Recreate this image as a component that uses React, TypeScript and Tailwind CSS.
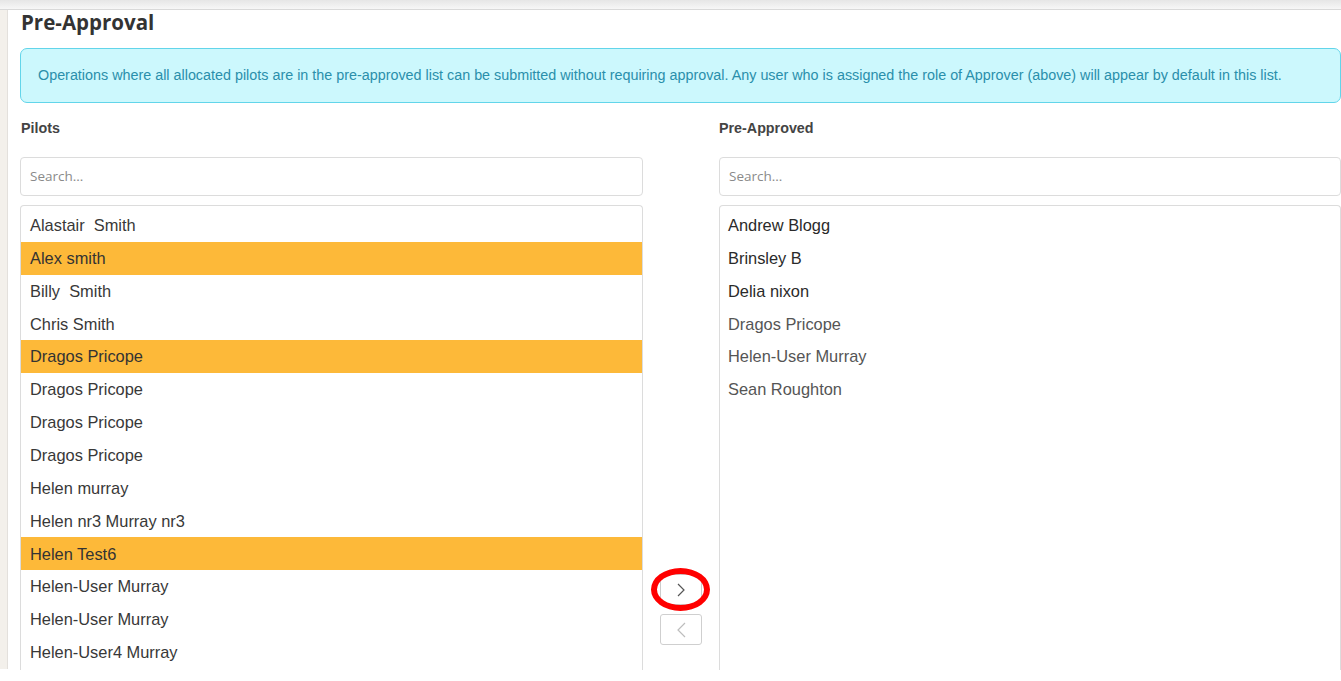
import React from "react";

type Row = { name: string; selected?: boolean; tone?: "dark" | "mid" };

const pilots: Row[] = [
  { name: "Alastair\u00a0 Smith" },
  { name: "Alex smith", selected: true },
  { name: "Billy\u00a0 Smith" },
  { name: "Chris Smith" },
  { name: "Dragos Pricope", selected: true },
  { name: "Dragos Pricope" },
  { name: "Dragos Pricope" },
  { name: "Dragos Pricope" },
  { name: "Helen murray" },
  { name: "Helen nr3 Murray nr3" },
  { name: "Helen Test6", selected: true },
  { name: "Helen-User Murray" },
  { name: "Helen-User Murray" },
  { name: "Helen-User4 Murray" },
];

const approved: Row[] = [
  { name: "Andrew Blogg", tone: "dark" },
  { name: "Brinsley B", tone: "dark" },
  { name: "Delia nixon", tone: "dark" },
  { name: "Dragos Pricope", tone: "mid" },
  { name: "Helen-User Murray", tone: "mid" },
  { name: "Sean Roughton", tone: "mid" },
];

const arial = { fontFamily: '"Liberation Sans", Arial, sans-serif' };
const open = { fontFamily: '"Open Sans", "Liberation Sans", sans-serif' };

function List({ rows, padX }: { rows: Row[]; padX: string }) {
  return (
    <div className="h-[465px] rounded-t-[4px] border border-b-0 border-[#dcdcdc] bg-white pt-[3px] overflow-hidden">
      {rows.map((r, i) => (
        <div
          key={i}
          style={arial}
          className={
            "flex h-[32.85px] items-center text-[16.4px] " +
            padX +
            " " +
            (r.selected
              ? "bg-[#fdb939] text-[#333]"
              : r.tone === "mid"
              ? "text-[#555]"
              : r.tone === "dark"
              ? "text-[#2a2a2a]"
              : "text-[#383838]")
          }
        >
          {r.name}
        </div>
      ))}
    </div>
  );
}

function Search() {
  return (
    <div className="flex h-[39px] items-center rounded-[4px] border border-[#dcdcdc] bg-white px-[9px]">
      <span style={open} className="text-[13.5px] text-[#8a8a8a]">
        Search...
      </span>
    </div>
  );
}

export default function App() {
  return (
    <div className="h-[681px] w-[1341px] overflow-hidden bg-white">
      <div className="h-[10px] border-b border-[#d9d9d9] bg-gradient-to-b from-[#e6e6e6] to-[#f7f7f7]" />
      <div className="flex h-[659px]">
        <div className="w-[8px] shrink-0 border-r border-[#e3e0dc] bg-[#f3f0eb]" />
        <div className="w-[1333px] shrink-0 pl-[12px]">
          <div className="w-[1321px]">
            <h1
              style={open}
              className="-mt-[2px] pl-[1px] text-[20.5px] leading-[28px] font-bold text-[#333]"
            >
              Pre-Approval
            </h1>
            <div className="mt-[12px] flex h-[55px] items-center rounded-[7px] border border-[#62d5ea] bg-[#ccf8fd] px-[17px] pt-[1px]">
              <p style={arial} className="whitespace-nowrap text-[14.35px] text-[#2a8fab]">
                Operations where all allocated pilots are in the pre-approved list can be submitted without requiring approval. Any user who is assigned the role of Approver (above) will appear by default in this list.
              </p>
            </div>
            <div className="mt-[15px] flex">
              <div className="w-[623px] shrink-0">
                <div style={arial} className="h-[20px] pl-[1px] text-[14.3px] leading-[20px] font-bold text-[#444]">
                  Pilots
                </div>
                <div className="mt-[19px]">
                  <Search />
                </div>
                <div className="mt-[9px]">
                  <List rows={pilots} padX="px-[9px]" />
                </div>
              </div>
              <div className="flex w-[76px] shrink-0 flex-col items-center pt-[456px] gap-[9px]">
                <div className="relative">
                  <button className="flex h-[31px] w-[42px] items-center justify-center rounded-[3px] border border-[#ccc] bg-white">
                    <svg width="8" height="14" viewBox="0 0 8 14" fill="none">
                      <polyline points="1,1 7,7 1,13" stroke="#555" strokeWidth="1.2" />
                    </svg>
                  </button>
                  <div className="absolute left-[-9px] top-[-6px] h-[43px] w-[59px] rounded-[50%] border-[6px] border-[#ff0000]" />
                </div>
                <button className="flex h-[31px] w-[42px] items-center justify-center rounded-[3px] border border-[#cfcfcf] bg-white">
                  <svg width="9" height="16" viewBox="0 0 9 16" fill="none">
                    <polyline points="8,1 1,8 8,15" stroke="#bdbdbd" strokeWidth="1.2" />
                  </svg>
                </button>
              </div>
              <div className="w-[622px] shrink-0">
                <div style={arial} className="h-[20px] text-[14.3px] leading-[20px] font-bold text-[#444]">
                  Pre-Approved
                </div>
                <div className="mt-[19px]">
                  <Search />
                </div>
                <div className="mt-[9px]">
                  <List rows={approved} padX="px-[8px]" />
                </div>
              </div>
            </div>
          </div>
        </div>
      </div>
    </div>
  );
}
